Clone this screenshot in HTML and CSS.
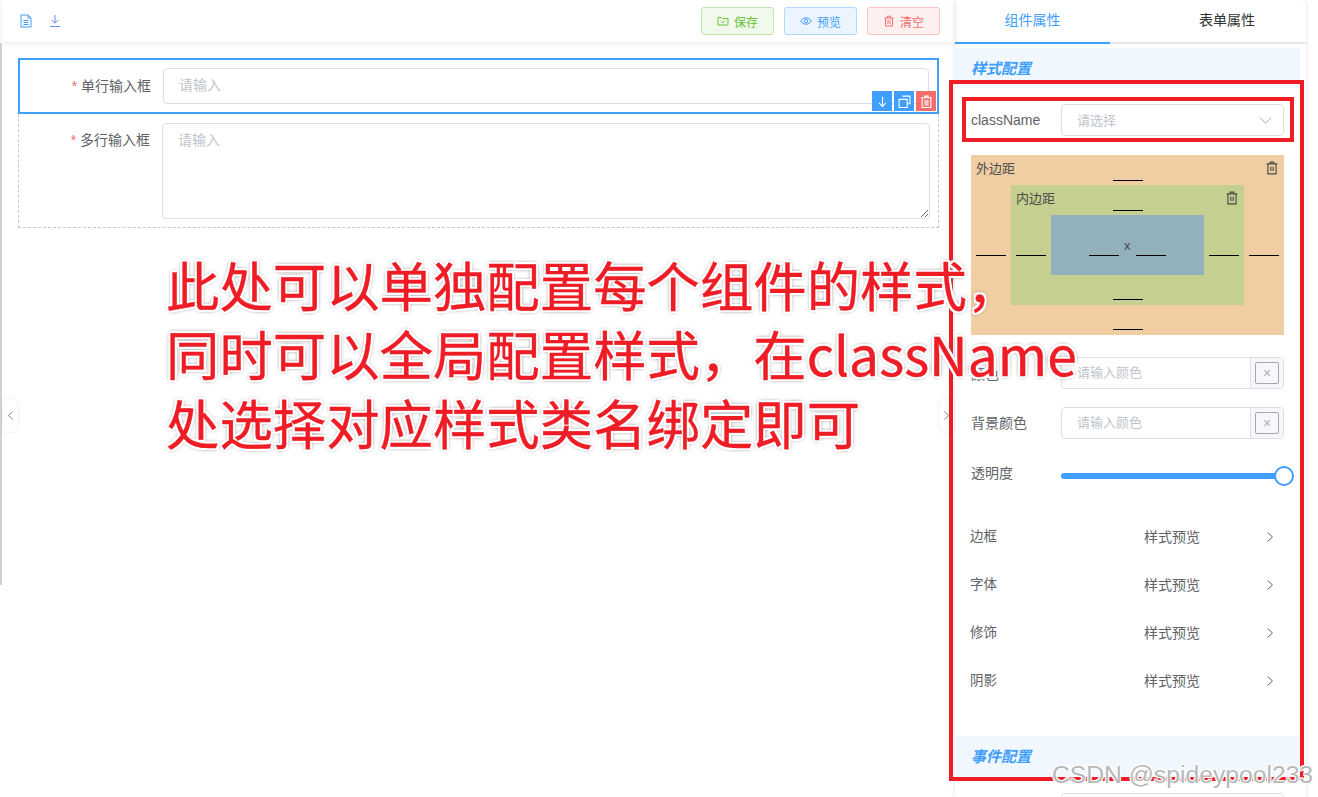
FILE: index.html
```html
<!DOCTYPE html>
<html lang="zh-CN">
<head>
<meta charset="utf-8">
<title>表单设计器</title>
<link rel="stylesheet" href="styles.css">
</head>
<body>
<div class="app">
  <main class="main">
    <header class="toolbar">
      <div class="tool-icons">
        <svg class="ti" viewBox="0 0 14 14"><path d="M2 1h7l3 3v9H2zM9 1v3h3M4.500 6.500h5M4.500 8.500h5M4.500 10.500h5" fill="none" stroke="#409eff" stroke-width="1"/></svg>
        <svg class="ti" viewBox="0 0 14 14"><path d="M7 1v8M3.800 6 7 9.200 10.200 6M2 12.500h10" fill="none" stroke="#5b8ff0" stroke-width="1"/></svg>
      </div>
      <div class="actions">
        <button class="btn save"><svg class="bi" viewBox="0 0 12 12"><path d="M1 2.500h3.500l1 1H11v6.500H1zM4 6.500l1.500 1.500L8 5.500" fill="none" stroke="currentColor"/></svg>保存</button>
        <button class="btn view"><svg class="bi" viewBox="0 0 12 12"><path d="M.8 6C2 3.800 4 2.800 6 2.800S10 3.800 11.200 6C10 8.200 8 9.200 6 9.200S2 8.200.8 6Z" fill="none" stroke="currentColor"/><circle cx="6" cy="6" r="1.800" fill="none" stroke="currentColor"/></svg>预览</button>
        <button class="btn clear"><svg class="bi" viewBox="0 0 12 12"><path d="M1.500 3h9M4.500 3V1.200h3V3M2.500 3v8h7V3M5 5v4M7 5v4" fill="none" stroke="currentColor"/></svg>清空</button>
      </div>
    </header>
    <div class="canvas">
      <div class="item selected">
        <label class="item-label"><i>*</i> 单行输入框</label>
        <div class="fake-input">请输入</div>
        <div class="item-tools">
          <span class="tool blue"><svg viewBox="0 0 12 12"><path d="M6 1.500v9M2.800 7.300 6 10.500l3.200-3.200" fill="none" stroke="#fff"/></svg></span>
          <span class="tool blue"><svg viewBox="0 0 12 12"><path d="M4 1h7v7H9M1 4h7.500v7.500H1z" fill="none" stroke="#fff"/></svg></span>
          <span class="tool red"><svg viewBox="0 0 12 12"><path d="M1 2.500h10M4.500 2.500V1h3v1.500M2 2.500v9h8v-9" fill="none" stroke="#fff"/><path d="M4 4.500h4v5.500H4z" fill="#fff" opacity=".6"/></svg></span>
        </div>
      </div>
      <div class="item dashed">
        <label class="item-label top"><i>*</i> 多行输入框</label>
        <div class="fake-area">请输入
          <svg class="grip" viewBox="0 0 10 10"><path d="M9 2 2 9M9 6 6 9" stroke="#666" stroke-width="1"/></svg>
        </div>
      </div>
    </div>
  </main>

  <aside class="panel">
    <nav class="tabs">
      <div class="tab active">组件属性</div>
      <div class="tab">表单属性</div>
    </nav>
    <section class="sec-head first">样式配置</section>
    <div class="row r-class">
      <span class="lab">className</span>
      <div class="field sel">请选择<svg class="chev-d" viewBox="0 0 12 12"><path d="M1 3.500 6 8.500 11 3.500" fill="none" stroke="#c0c4cc"/></svg></div>
    </div>
    <div class="boxmodel margin">
      <span class="box-title">外边距</span>
      <svg class="trash" viewBox="0 0 12 12"><path d="M1.500 2.500h9M4.500 2.500V1h3v1.500M2.500 2.500v8.500h7V2.500M5 5v3.500M7 5v3.500" fill="none" stroke="#4a4a4a"/></svg>
      <span class="cell c-top"><u></u></span>
      <span class="cell c-left"><u></u></span>
      <div class="boxmodel padding">
        <span class="box-title">内边距</span>
        <svg class="trash" viewBox="0 0 12 12"><path d="M1.500 2.500h9M4.500 2.500V1h3v1.500M2.500 2.500v8.500h7V2.500M5 5v3.500M7 5v3.500" fill="none" stroke="#4a4a4a"/></svg>
        <span class="cell c-top"><u></u></span>
        <span class="cell c-left"><u></u></span>
        <div class="content"><u></u><b>x</b><u></u></div>
        <span class="cell c-right"><u></u></span>
        <span class="cell c-bottom"><u></u></span>
      </div>
      <span class="cell c-right"><u></u></span>
      <span class="cell c-bottom"><u></u></span>
    </div>
    <div class="row r-color">
      <span class="lab">颜色</span>
      <div class="field color"><span class="ph">请输入颜色</span><span class="addon"><span class="swatch">×</span></span></div>
    </div>
    <div class="row r-bg">
      <span class="lab lift">背景颜色</span>
      <div class="field color"><span class="ph">请输入颜色</span><span class="addon"><span class="swatch">×</span></span></div>
    </div>
    <div class="row r-slider">
      <span class="lab up">透明度</span>
      <div class="slider"><span class="thumb"></span></div>
    </div>
    <div class="srow s-first"><span class="lab">边框</span><span class="val">样式预览</span><svg class="chev" viewBox="0 0 8 12"><path d="M1.500 1.500 6.500 6 1.500 10.500" fill="none" stroke="#606266"/></svg></div>
    <div class="srow"><span class="lab">字体</span><span class="val">样式预览</span><svg class="chev" viewBox="0 0 8 12"><path d="M1.500 1.500 6.500 6 1.500 10.500" fill="none" stroke="#606266"/></svg></div>
    <div class="srow"><span class="lab">修饰</span><span class="val">样式预览</span><svg class="chev" viewBox="0 0 8 12"><path d="M1.500 1.500 6.500 6 1.500 10.500" fill="none" stroke="#606266"/></svg></div>
    <div class="srow"><span class="lab">阴影</span><span class="val">样式预览</span><svg class="chev" viewBox="0 0 8 12"><path d="M1.500 1.500 6.500 6 1.500 10.500" fill="none" stroke="#606266"/></svg></div>
    <section class="sec-head event">事件配置</section>
    <div class="row r-last"><div class="field"></div></div>
  </aside>
</div>

<div class="edge-bar"></div>
<div class="handle h-left"><svg viewBox="0 0 8 12"><path d="M6.500 1.500 1.500 6 6.500 10.500" fill="none" stroke="#777"/></svg></div>
<div class="handle h-right"><svg viewBox="0 0 8 12"><path d="M1.500 1.500 6.500 6 1.500 10.500" fill="none" stroke="#777"/></svg></div>

<div class="mark-outer"></div>
<div class="mark-inner"></div>
<div class="note">此处可以单独配置每个组件的样式，<br>同时可以全局配置样式，在className<br>处选择对应样式类名绑定即可</div>
<div class="water">CSDN @spideypool233</div>
</body>
</html>
```

FILE: styles.css
```css
* { box-sizing: border-box; }
html, body { margin: 0; height: 100%; overflow: hidden; background: #fff; }
body { position: relative; width: 1318px; height: 797px; font: 14px "Liberation Sans", "Noto Sans CJK SC", sans-serif; color: #606266; }

.app { display: flex; height: 797px; padding-left: 2px; padding-right: 12px; }
.main { width: 953px; display: flex; flex-direction: column; }

.toolbar { height: 42px; display: flex; justify-content: space-between; padding: 7px 15px 0 17px; box-shadow: 0 1px 5px rgba(0,0,0,.1); }
.tool-icons { display: flex; gap: 15px; padding-top: 7px; height: 28px; }
.ti { width: 14px; height: 14px; }
.actions { display: flex; gap: 10px; }
.btn { width: 73px; height: 28px; padding: 0; display: flex; align-items: center; justify-content: center; gap: 5px; border-radius: 3px; border: 1px solid; font: 12px "Liberation Sans", "Noto Sans CJK SC", sans-serif; }
.bi { width: 12px; height: 12px; }
.save { background: #f0f9eb; border-color: #c2e7b0; color: #67c23a; }
.view { background: #ecf5ff; border-color: #b3d8ff; color: #409eff; }
.clear { background: #fef0f0; border-color: #fbc4c4; color: #f56c6c; }

.canvas { padding: 16px 14px 0 16px; }
.item { position: relative; display: flex; width: 921px; }
.selected { height: 56px; border: 2px solid #409eff; align-items: center; padding: 0 8px 0 0; }
.dashed { height: 114px; border: 1px dashed #c9c9c9; border-top: 0; padding: 9px 8px 0 0; }
.item-label { flex: none; text-align: right; color: #606266; }
.selected .item-label { width: 131px; margin-right: 12px; margin-top: -2px; }
.top { width: 131px; margin-right: 12px; line-height: 34px; height: 34px; }
.item-label i { color: #f56c6c; font-style: normal; }
.fake-input { flex: 1; height: 36px; border: 1px solid #dcdfe6; border-radius: 4px; padding-left: 15px; line-height: 32px; color: #c0c4cc; }
.fake-area { position: relative; flex: 1; height: 96px; border: 1px solid #dcdfe6; border-radius: 4px; padding: 5px 15px; line-height: 22px; color: #c0c4cc; }
.grip { position: absolute; right: 0; bottom: 0; width: 10px; height: 10px; }
.item-tools { position: absolute; right: 1px; bottom: 1px; display: flex; gap: 2px; }
.tool { width: 20px; height: 20px; display: flex; align-items: center; justify-content: center; }
.tool svg { width: 13px; height: 13px; }
.blue { background: #409eff; }
.red { background: #f56c6c; }

.panel { width: 351px; box-shadow: 0 0 5px rgba(0,0,0,.12); border-radius: 0 6px 0 0; overflow: hidden; }
.tabs { display: flex; height: 44px; border-bottom: 2px solid #e4e7ed; }
.tab { width: 155px; height: 44px; text-align: center; line-height: 40px; color: #303133; }
.tab + .tab { width: 196px; padding-left: 38px; }
.tab.active { color: #409eff; border-bottom: 2px solid #409eff; }

.sec-head { width: 345px; height: 42px; background: #f0f7ff; padding-left: 16px; line-height: 41px; font-size: 15px; color: #409eff; font-weight: 700; font-style: italic; }
.first { margin-top: 4px; height: 40px; }
.event { margin-top: 39px; }

.row { display: flex; align-items: center; padding-left: 16px; height: 32px; }
.lab { display: block; width: 90px; flex: none; color: #606266; }
.lift { margin-top: -2px; }
.r-class { margin-top: 16px; }
.field { width: 223px; height: 32px; border: 1px solid #dcdfe6; border-radius: 4px; font-size: 13px; color: #c0c4cc; }
.sel { position: relative; padding-left: 15px; line-height: 31px; }
.chev-d { position: absolute; right: 11px; top: 9px; width: 13px; height: 13px; }

.boxmodel { position: relative; display: grid; grid-template-columns: 40px 1fr 40px; grid-template-rows: 30px 1fr 30px; }
.margin { width: 313px; height: 180px; margin: 19px 0 0 16px; background: #f0cda2; }
.padding { background: #c5cf90; grid-column: 2; grid-row: 2; }
.box-title { position: absolute; left: 5px; top: 5px; font-size: 13px; line-height: 17px; color: #4a4a4a; }
.trash { position: absolute; right: 5px; top: 6px; width: 14px; height: 14px; }
.cell { display: flex; justify-content: center; }
.cell u, .content u { display: block; width: 30px; height: 1px; background: #000; }
.c-top { grid-column: 2; grid-row: 1; align-items: flex-end; padding-bottom: 4px; }
.c-bottom { grid-column: 2; grid-row: 3; align-items: flex-end; padding-bottom: 5px; }
.c-left { grid-column: 1; grid-row: 2; align-items: center; padding: 20px 5px 0 0; justify-content: flex-end; }
.c-right { grid-column: 3; grid-row: 2; align-items: center; padding: 20px 0 0 5px; justify-content: flex-start; }
.content { grid-column: 2; grid-row: 2; background: #93b1bd; display: flex; justify-content: center; align-items: center; gap: 17px; padding-top: 20px; position: relative; }
.content b { position: absolute; left: 73px; top: 22px; font-weight: 400; font-size: 13px; line-height: 17px; color: #4a4a4a; }

.r-color { margin-top: 22px; }
.r-bg { margin-top: 18px; }
.color { position: relative; display: flex; overflow: hidden; }
.ph { flex: 1; padding-left: 15px; line-height: 30px; }
.addon { width: 33px; background: #f5f7fa; border-left: 1px solid #dcdfe6; display: flex; align-items: center; justify-content: center; }
.swatch { width: 24px; height: 22px; border: 1px solid #a8a8a8; border-radius: 2px; line-height: 20px; text-align: center; color: #b0b0b0; font-size: 14px; }

.r-slider { margin-top: 21px; }
.up { margin-top: -8px; }
.slider { position: relative; width: 223px; height: 6px; border-radius: 3px; background: #409eff; }
.thumb { position: absolute; right: -10px; top: -7px; width: 20px; height: 20px; border-radius: 50%; background: #fff; border: 2px solid #409eff; }

.srow { position: relative; display: flex; align-items: center; height: 32px; margin-top: 16px; padding-left: 15px; }
.s-first { margin-top: 29px; }
.srow .lab { width: 174px; margin-top: -4px; color: #606266; font-size: 13.500px; }
.val { width: 120px; margin-top: -2px; color: #606266; font-size: 14px; }
.chev { width: 8px; height: 12px; margin-left: 2px; }

.r-last { margin-top: 15px; padding-left: 106px; }

.edge-bar { position: absolute; left: 0; top: 43px; width: 2px; height: 542px; background: #d0d0d0; }
.handle { position: absolute; top: 399px; width: 15px; height: 33px; background: #fff; display: flex; align-items: center; justify-content: center; box-shadow: 0 0 3px rgba(0,0,0,.1); }
.handle svg { width: 7px; height: 11px; }
.h-left { left: 3px; border-radius: 0 6px 6px 0; }
.h-right { left: 939px; border-radius: 6px 0 0 6px; }

.mark-outer { position: absolute; left: 949px; top: 80px; width: 355px; height: 701px; border: 4px solid #ee1c25; }
.mark-inner { position: absolute; left: 962px; top: 97px; width: 332px; height: 45px; border: 4px solid #ee1c25; }

.note { position: absolute; left: 166px; top: 249px; font: 400 53.400px/69px "Noto Sans CJK SC", sans-serif; color: #ee1c25; white-space: nowrap; -webkit-text-stroke: .4px #ee1c25;
  text-shadow: 2px 0 0 #fff, -2px 0 0 #fff, 0 2px 0 #fff, 0 -2px 0 #fff, 2px 2px 0 #fff, -2px 2px 0 #fff, 2px -2px 0 #fff, -2px -2px 0 #fff, 0 0 4px #777, 0 0 5px #888; }
.water { position: absolute; left: 1052px; top: 760px; font: 24.700px/30px "Liberation Sans", sans-serif; color: #b8b8b8; white-space: nowrap; text-shadow: 1px 1px 0 #fff, -1px -1px 0 #fff, 1px -1px 0 #fff, -1px 1px 0 #fff; }
```
